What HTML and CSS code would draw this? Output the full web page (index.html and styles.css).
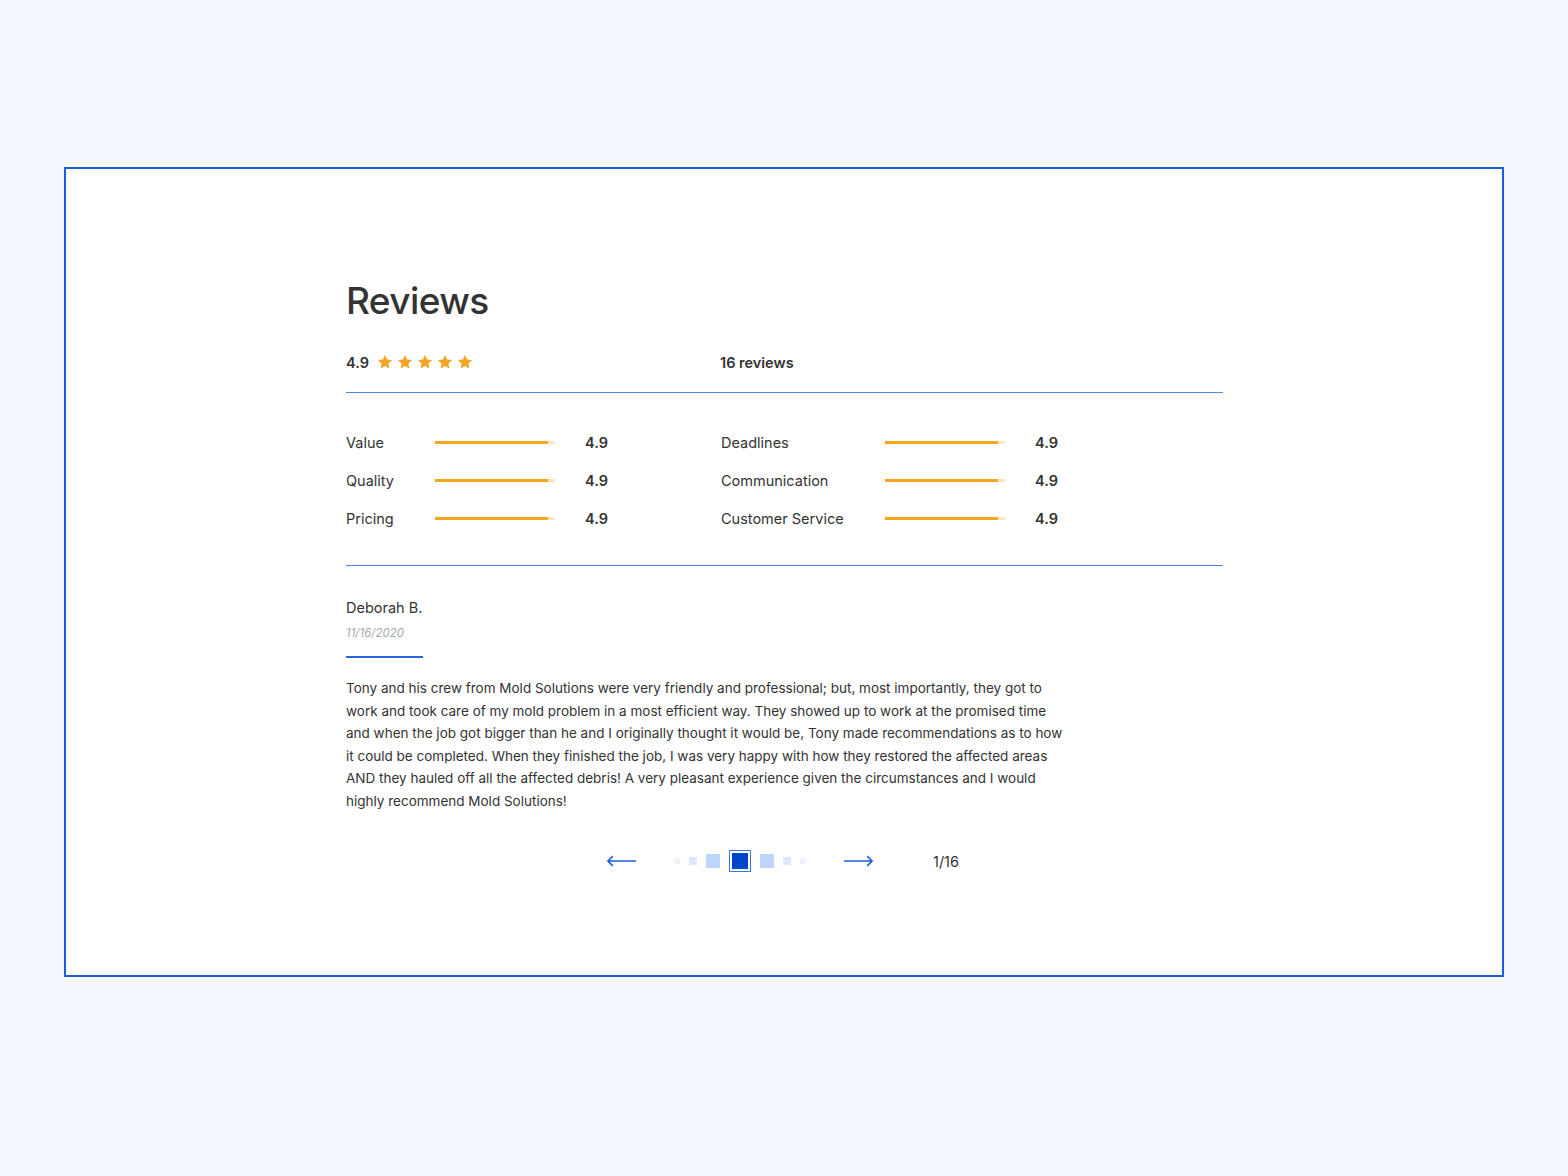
FILE: index.html
```html
<!DOCTYPE html>
<html lang="en">
<head>
    <meta charset="UTF-8">
    <meta name="viewport" content="width=device-width, initial-scale=1.0">
    <title>Reviews</title>
    <link rel="stylesheet" href="styles.css">
</head>
<body>

    <section class="reviews-box">
        <div class="reviews">
            <h2 class="title">Reviews</h2>

            <div class="summary">
                <div class="score">
                    <b>4.9</b>
                    <span class="stars">
                        <svg viewBox="0 0 24 24"><path d="M12 2.5l2.9 6.1 6.6.8-4.9 4.6 1.3 6.6L12 17.3l-5.9 3.3 1.3-6.6-4.9-4.6 6.6-.8z"/></svg>
                        <svg viewBox="0 0 24 24"><path d="M12 2.5l2.9 6.1 6.6.8-4.9 4.6 1.3 6.6L12 17.3l-5.9 3.3 1.3-6.6-4.9-4.6 6.6-.8z"/></svg>
                        <svg viewBox="0 0 24 24"><path d="M12 2.5l2.9 6.1 6.6.8-4.9 4.6 1.3 6.6L12 17.3l-5.9 3.3 1.3-6.6-4.9-4.6 6.6-.8z"/></svg>
                        <svg viewBox="0 0 24 24"><path d="M12 2.5l2.9 6.1 6.6.8-4.9 4.6 1.3 6.6L12 17.3l-5.9 3.3 1.3-6.6-4.9-4.6 6.6-.8z"/></svg>
                        <svg viewBox="0 0 24 24"><path d="M12 2.5l2.9 6.1 6.6.8-4.9 4.6 1.3 6.6L12 17.3l-5.9 3.3 1.3-6.6-4.9-4.6 6.6-.8z"/></svg>
                    </span>
                </div>
                <div class="count">16 reviews</div>
            </div>

            <div class="ratings">
                <span class="label">Value</span>
                <span class="bar"><i style="width:94%"></i></span>
                <b class="value">4.9</b>
                <span class="label">Deadlines</span>
                <span class="bar"><i style="width:94%"></i></span>
                <b class="value">4.9</b>

                <span class="label">Quality</span>
                <span class="bar"><i style="width:94%"></i></span>
                <b class="value">4.9</b>
                <span class="label">Communication</span>
                <span class="bar"><i style="width:94%"></i></span>
                <b class="value">4.9</b>

                <span class="label">Pricing</span>
                <span class="bar"><i style="width:94%"></i></span>
                <b class="value">4.9</b>
                <span class="label">Customer Service</span>
                <span class="bar"><i style="width:94%"></i></span>
                <b class="value">4.9</b>
            </div>

            <div class="review">
                <div class="author">Deborah B.</div>
                <div class="date">11/16/2020</div>
                <hr class="short-line">
                <p class="text">Tony and his crew from Mold Solutions were very friendly and professional; but, most importantly, they got to work and took care of my mold problem in a most efficient way. They showed up to work at the promised time and when the job got bigger than he and I originally thought it would be, Tony made recommendations as to how it could be completed. When they finished the job, I was very happy with how they restored the affected areas AND they hauled off all the affected debris! A very pleasant experience given the circumstances and I would highly recommend Mold Solutions!</p>
            </div>

            <div class="pager">
                <button class="arrow">
                    <svg viewBox="0 0 32 12"><path d="M31 6H2M7 1L2 6l5 5"/></svg>
                </button>
                <div class="dots">
                    <span class="dot d1"></span>
                    <span class="dot d2"></span>
                    <span class="dot d3"></span>
                    <span class="dot active"><i></i></span>
                    <span class="dot d3"></span>
                    <span class="dot d2"></span>
                    <span class="dot d1"></span>
                </div>
                <button class="arrow">
                    <svg viewBox="0 0 32 12"><path d="M1 6h29M25 1l5 5-5 5"/></svg>
                </button>
                <span class="page">1/16</span>
            </div>
        </div>
    </section>

</body>
</html>
```

FILE: styles.css
```css
body {
    margin: 0;
    background-color: #f5f8fe;
    font-family: Inter, "Noto Sans", sans-serif;
    color: #333333;
    padding: 167px 64px 0;
}
.reviews-box {
    background-color: #ffffff;
    border: 2px solid #1c5ed6;
    height: 810px;
    box-sizing: border-box;
    padding: 0 0 0 280px;
}
.reviews {
    width: 877px;
    padding-top: 112px;
}
.title {
    margin: 0;
    font-size: 37px;
    font-weight: 500;
    line-height: 40px;
    color: #333333;
    letter-spacing: -0.6px;
}
.summary {
    display: flex;
    align-items: center;
    margin-top: 32px;
    padding-bottom: 21px;
    border-bottom: 1px solid #4d86ea;
    font-size: 14.5px;
}
.score {
    display: flex;
    align-items: center;
    width: 374px;
}
.score b {
    font-weight: 600;
    margin-right: 7px;
}
.stars {
    display: flex;
    gap: 2px;
}
.stars svg {
    width: 18px;
    height: 18px;
    fill: #f5a524;
}
.count {
    font-weight: 600;
}

.ratings {
    display: grid;
    grid-template-columns: 89px 120px 166px 164px 120px auto;
    row-gap: 17px;
    align-items: center;
    padding: 39px 0 36px;
    border-bottom: 1px solid #4d86ea;
    font-size: 14.5px;
    line-height: 21px;
}
.bar {
    display: block;
    height: 3px;
    background-color: #fde6bd;
}
.bar i {
    display: block;
    height: 100%;
    background-color: #f5a623;
}
.value {
    font-weight: 600;
    padding-left: 30px;
}

.review {
    padding-top: 31px;
}
.author {
    font-size: 14.5px;
    line-height: 22px;
}
.date {
    margin-top: 7px;
    font-size: 11.5px;
    font-style: italic;
    color: #a9a9a9;
}
.short-line {
    width: 77px;
    margin: 16px 0 0;
    border: 0;
    border-top: 2px solid #2a66d9;
}
.text {
    width: 720px;
    margin: 19px 0 0;
    font-size: 13.5px;
    line-height: 22.5px;
    color: #333333;
}

.pager {
    display: flex;
    align-items: center;
    margin-top: 38px;
    padding-left: 260px;
}
.arrow {
    border: 0;
    background: none;
    padding: 0;
    width: 31px;
    height: 12px;
    cursor: pointer;
}
.arrow svg {
    display: block;
    width: 31px;
    height: 12px;
    fill: none;
    stroke: #1c5ed6;
    stroke-width: 1.6;
}
.dots {
    display: flex;
    align-items: center;
    gap: 9px;
    margin: 0 37px;
}
.dot {
    display: block;
}
.d1 {
    width: 6px;
    height: 6px;
    background-color: #eef3fd;
}
.d2 {
    width: 8px;
    height: 8px;
    background-color: #dbe7fc;
}
.d3 {
    width: 14px;
    height: 14px;
    background-color: #bfd5fb;
}
.active {
    width: 22px;
    height: 22px;
    box-sizing: border-box;
    border: 1px solid #3b78e6;
    padding: 2px;
}
.active i {
    display: block;
    width: 16px;
    height: 16px;
    background-color: #0047cc;
}
.page {
    margin-left: 59px;
    font-size: 14.5px;
}
```
